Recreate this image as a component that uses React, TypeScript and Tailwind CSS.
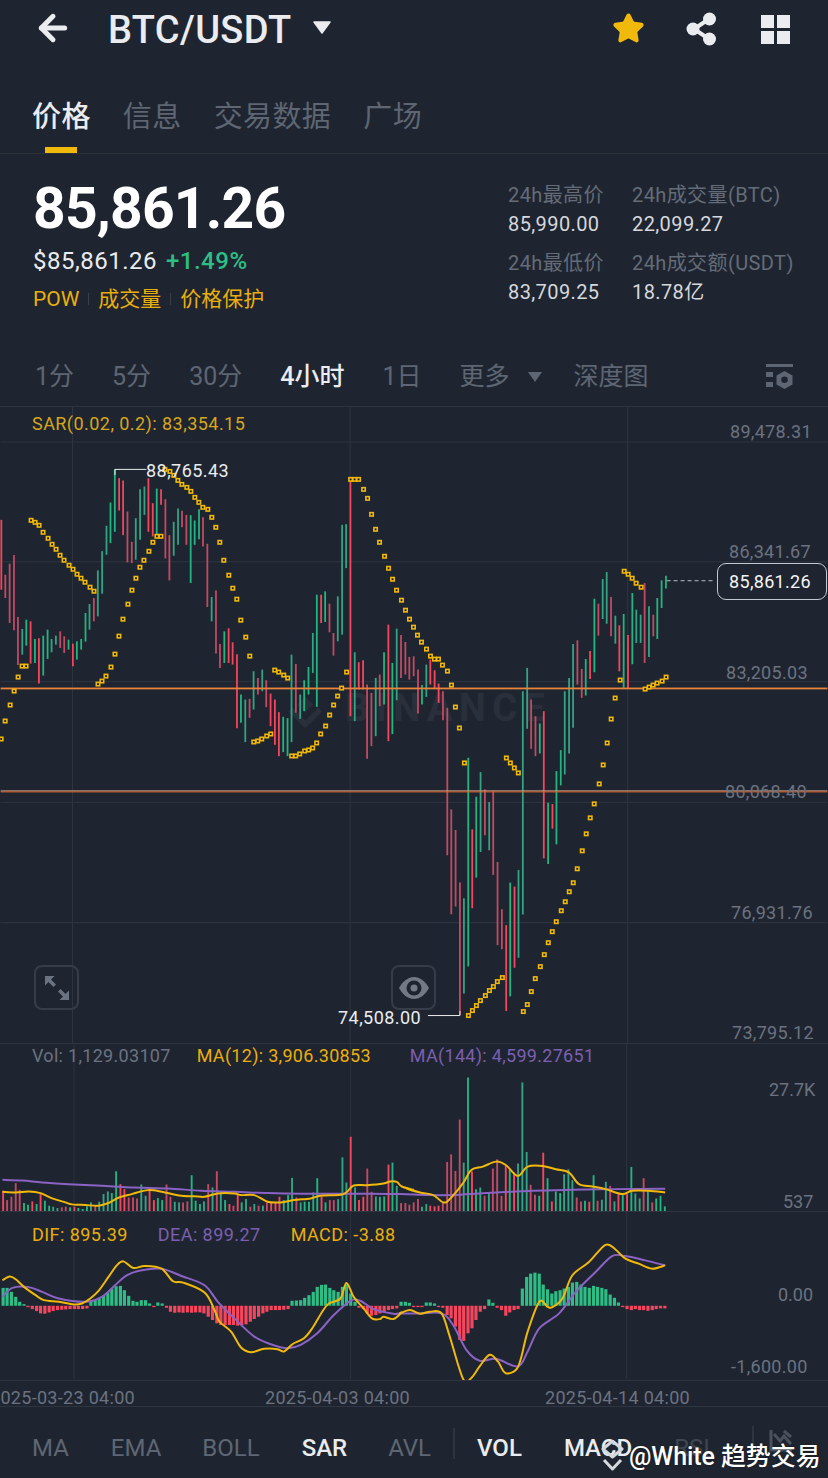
import { ArrowLeft, Star } from "lucide-react"

type Bar = [number, number, number, string]
type Vol = [number, number, string]
type Pt = [number, number]

// values read off the chart at 3x: left half x/3, right half 400 + x/3, y relative to the pane origin
const candlesL: Bar[] = [
  [2, 330, 540, "r"], [14, 495, 565, "d"], [27, 462, 640, "d"], [40, 436, 662, "d"], [52, 622, 766, "d"], [65, 658, 735, "h"],
  [77, 630, 708, "g"], [90, 635, 762, "r"], [103, 688, 760, "g"], [115, 686, 822, "r"], [128, 678, 798, "g"], [141, 660, 748, "g"],
  [153, 688, 728, "h"], [166, 678, 705, "h"], [179, 665, 715, "d"], [191, 680, 730, "d"], [204, 690, 720, "g"], [217, 702, 770, "r"],
  [229, 695, 750, "g"], [242, 688, 720, "g"], [255, 610, 696, "g"], [267, 583, 660, "h"], [280, 565, 635, "d"], [292, 482, 620, "h"],
  [305, 424, 552, "h"], [318, 348, 435, "h"], [330, 278, 400, "g"], [343, 178, 366, "g"], [356, 205, 302, "r"], [368, 212, 376, "r"],
  [381, 305, 458, "d"], [394, 396, 460, "d"], [406, 325, 450, "h"], [419, 238, 390, "h"], [432, 230, 315, "h"], [444, 205, 366, "r"],
  [457, 280, 380, "r"], [469, 236, 378, "g"], [482, 238, 285, "r"], [495, 268, 446, "d"], [507, 376, 512, "d"], [520, 336, 438, "h"],
  [533, 296, 405, "h"], [545, 303, 352, "d"], [558, 315, 405, "d"], [571, 316, 520, "g"], [583, 332, 405, "g"], [596, 298, 388, "g"],
  [608, 322, 410, "d"], [621, 402, 592, "d"], [634, 562, 635, "h"], [647, 542, 732, "d"], [659, 703, 775, "d"], [672, 665, 760, "g"],
  [685, 656, 760, "r"], [697, 698, 765, "r"], [710, 734, 956, "r"], [722, 855, 940, "g"], [735, 870, 998, "h"], [748, 868, 925, "d"],
  [760, 785, 900, "h"], [773, 805, 855, "d"], [786, 780, 845, "h"], [798, 812, 893, "d"], [811, 852, 950, "r"], [824, 870, 1006, "r"],
  [836, 908, 1040, "r"], [849, 922, 1028, "g"], [862, 926, 1040, "g"], [874, 735, 998, "h"], [887, 763, 910, "d"], [900, 855, 928, "h"],
  [912, 812, 905, "g"], [925, 772, 855, "g"], [938, 670, 790, "h"], [950, 555, 892, "g"], [963, 555, 640, "r"], [975, 545, 637, "g"],
  [988, 582, 668, "d"], [1000, 670, 738, "d"], [1013, 560, 695, "h"], [1026, 345, 675, "h"], [1038, 343, 475, "h"], [1051, 215, 920, "r"],
  [1064, 728, 935, "h"], [1076, 758, 840, "r"], [1089, 752, 840, "r"], [1101, 825, 1048, "d"], [1114, 850, 1010, "d"], [1127, 805, 980, "h"],
  [1139, 795, 890, "d"], [1152, 728, 885, "g"], [1165, 645, 995, "r"], [1177, 760, 974, "g"], [1190, 657, 872, "h"], [1203, 676, 805, "d"],
  [1216, 697, 795, "d"], [1228, 742, 810, "d"], [1241, 740, 800, "d"],
]
const candlesR: Bar[] = [
  [54, 780, 912, "d"], [66, 826, 885, "g"], [79, 765, 862, "h"], [91, 750, 825, "r"], [104, 782, 836, "r"], [116, 822, 880, "r"],
  [129, 845, 932, "d"], [142, 895, 1338, "d"], [154, 1200, 1515, "d"], [167, 1262, 1492, "d"], [180, 1420, 1818, "d"], [192, 1467, 1753, "h"],
  [205, 1045, 1672, "g"], [217, 1260, 1497, "r"], [229, 1162, 1405, "g"], [242, 1088, 1328, "h"], [255, 1140, 1278, "d"], [268, 1178, 1323, "h"],
  [280, 1146, 1397, "d"], [293, 1358, 1608, "d"], [306, 1500, 1620, "d"], [319, 1548, 1806, "r"], [331, 1420, 1762, "g"], [344, 1432, 1676, "r"],
  [356, 1382, 1646, "h"], [369, 845, 1516, "h"], [382, 775, 958, "h"], [394, 870, 1018, "d"], [407, 920, 1040, "d"], [420, 942, 1032, "g"],
  [432, 905, 1347, "r"], [445, 1180, 1364, "g"], [458, 1184, 1258, "r"], [470, 1085, 1305, "g"], [483, 1022, 1128, "g"], [495, 845, 1095, "h"],
  [508, 805, 1032, "h"], [520, 703, 955, "h"], [533, 692, 825, "d"], [546, 778, 865, "d"], [558, 748, 858, "g"], [571, 724, 808, "r"],
  [584, 567, 788, "g"], [596, 582, 678, "d"], [609, 508, 628, "h"], [621, 487, 642, "h"], [634, 562, 680, "d"], [647, 618, 702, "h"],
  [659, 647, 785, "r"], [672, 613, 835, "g"], [685, 676, 835, "r"], [698, 550, 764, "g"], [710, 600, 700, "h"], [723, 615, 700, "h"],
  [735, 520, 760, "d"], [748, 590, 742, "h"], [761, 615, 680, "d"], [773, 565, 688, "g"], [786, 512, 595, "g"], [799, 498, 536, "g"],
]

const sarL: Pt[] = [
  [2, 988], [14, 935], [27, 887], [39, 843], [52, 801], [65, 768], [77, 768],
  [90, 330], [102, 338], [115, 347], [128, 366], [141, 384], [153, 402], [166, 418], [178, 435], [191, 450], [204, 465], [216, 479], [229, 492], [242, 506], [254, 518], [267, 531], [279, 543],
  [292, 822], [305, 815], [317, 799], [330, 772], [343, 733], [355, 678], [368, 627], [381, 583], [393, 542], [406, 506], [419, 473], [431, 450], [444, 423], [457, 398], [469, 379], [482, 378],
  [493, 178], [507, 185], [520, 196], [532, 210], [545, 222], [558, 233], [570, 244], [583, 261], [596, 276], [608, 291], [621, 297], [633, 321], [646, 353], [658, 398], [671, 451], [684, 496], [697, 535], [709, 569], [722, 631], [735, 683], [747, 739],
  [760, 997], [773, 994], [785, 989], [798, 980], [811, 973],
  [823, 780], [836, 786], [849, 796], [861, 805],
  [874, 1040], [886, 1038], [899, 1032], [912, 1025], [924, 1021], [937, 1015], [950, 1001], [962, 974], [975, 949], [987, 917], [1000, 887], [1013, 860], [1025, 834], [1038, 786],
  [1051, 209], [1064, 209], [1076, 209], [1089, 238], [1101, 266], [1114, 313], [1127, 357], [1139, 398], [1152, 438], [1164, 474], [1177, 509], [1190, 541], [1203, 571], [1215, 600], [1228, 627], [1240, 652], [1253, 676],
]
const sarR: Pt[] = [
  [65, 698], [78, 719], [91, 740], [103, 748], [116, 748], [128, 766], [141, 783], [154, 827], [166, 893], [179, 956], [192, 1059],
  [205, 1819], [217, 1804], [229, 1789], [242, 1774], [255, 1759], [267, 1745], [280, 1731], [293, 1717], [306, 1704],
  [318, 1044], [331, 1059], [344, 1074], [356, 1089],
  [369, 1807], [381, 1787], [394, 1747], [407, 1708], [420, 1671], [432, 1635], [445, 1600], [458, 1567], [470, 1536], [483, 1505], [495, 1476], [508, 1448], [520, 1421], [533, 1378], [546, 1323], [558, 1272], [571, 1226], [584, 1183], [597, 1122], [609, 1066], [622, 999], [634, 927], [647, 866], [660, 812],
  [672, 485], [685, 492], [698, 506], [710, 520], [723, 533],
  [736, 838], [748, 831], [761, 825], [773, 819], [786, 813], [799, 801],
]

const volL: Vol[] = [
  [2, 455, "r"], [14, 483, "d"], [27, 473, "d"], [40, 432, "d"], [52, 452, "d"], [65, 492, "g"], [77, 497, "g"], [90, 487, "r"], [103, 495, "g"], [115, 465, "r"], [128, 485, "g"], [141, 500, "g"], [153, 503, "h"], [166, 507, "h"], [179, 505, "d"], [191, 503, "d"], [204, 505, "g"], [217, 503, "r"], [229, 507, "g"], [242, 510, "g"], [255, 502, "g"], [267, 490, "h"], [280, 498, "d"], [292, 488, "h"], [305, 465, "h"], [318, 457, "h"], [330, 462, "g"], [343, 396, "g"], [356, 435, "r"], [368, 450, "r"], [381, 475, "d"], [394, 475, "d"], [406, 478, "d"], [419, 436, "h"], [432, 470, "h"], [444, 447, "r"], [457, 483, "r"], [469, 477, "g"], [482, 483, "g"], [495, 436, "d"], [507, 473, "d"], [520, 488, "h"], [533, 490, "h"], [545, 490, "d"], [558, 487, "d"], [571, 408, "g"], [583, 485, "g"], [596, 495, "g"], [608, 487, "h"], [621, 435, "d"], [634, 445, "h"], [647, 396, "d"], [659, 460, "h"], [672, 483, "g"], [685, 495, "r"], [697, 500, "d"], [710, 465, "r"], [722, 490, "g"], [735, 480, "h"], [748, 503, "d"], [760, 495, "h"], [773, 500, "d"], [786, 500, "h"], [798, 490, "d"], [811, 490, "r"], [824, 490, "r"], [836, 473, "r"], [849, 483, "g"], [862, 468, "g"], [874, 416, "h"], [887, 475, "d"], [900, 490, "h"], [912, 488, "g"], [925, 488, "g"], [938, 460, "h"], [950, 417, "g"], [963, 473, "r"], [975, 490, "g"], [988, 483, "d"], [1000, 483, "d"], [1013, 480, "h"], [1026, 354, "h"], [1038, 430, "h"], [1051, 292, "r"], [1064, 445, "h"], [1076, 483, "r"], [1089, 473, "r"], [1101, 388, "d"], [1114, 458, "d"], [1127, 472, "h"], [1139, 473, "g"], [1152, 472, "g"], [1165, 376, "r"], [1177, 370, "g"], [1190, 440, "h"], [1203, 492, "d"], [1216, 492, "d"], [1228, 497, "d"], [1241, 490, "d"],
]
const volR: Vol[] = [
  [54, 480, "d"], [66, 503, "g"], [79, 495, "h"], [91, 500, "r"], [104, 502, "r"], [116, 500, "r"], [129, 490, "d"], [142, 368, "d"], [154, 345, "d"], [167, 395, "d"], [180, 240, "d"], [192, 370, "h"], [205, 113, "g"], [217, 397, "r"], [229, 450, "g"], [242, 445, "h"], [255, 470, "d"], [268, 460, "h"], [280, 388, "d"], [293, 360, "d"], [306, 470, "d"], [319, 380, "r"], [331, 390, "g"], [344, 400, "r"], [356, 373, "h"], [369, 128, "h"], [382, 338, "h"], [394, 437, "d"], [407, 467, "d"], [420, 470, "g"], [432, 340, "r"], [445, 417, "g"], [458, 487, "r"], [470, 457, "g"], [483, 462, "g"], [495, 405, "h"], [508, 390, "h"], [520, 423, "h"], [533, 475, "d"], [546, 487, "d"], [558, 485, "g"], [571, 488, "r"], [584, 408, "g"], [596, 485, "d"], [609, 482, "h"], [621, 428, "h"], [634, 440, "d"], [647, 487, "h"], [659, 465, "r"], [672, 468, "g"], [685, 465, "r"], [698, 383, "g"], [710, 463, "h"], [723, 478, "h"], [735, 417, "d"], [748, 455, "h"], [761, 490, "d"], [773, 478, "g"], [786, 470, "g"], [799, 502, "g"],
]

const volYellowL: Pt[] = [[0, 458], [40, 460], [80, 457], [115, 462], [150, 478], [190, 490], [210, 496], [250, 498], [290, 500], [320, 492], [350, 476], [390, 465], [440, 453], [490, 460], [540, 470], [590, 472], [610, 473], [650, 463], [700, 463], [720, 468], [760, 468], [800, 488], [840, 490], [880, 483], [930, 478], [960, 470], [1020, 467], [1040, 458], [1060, 439], [1100, 438], [1150, 433], [1170, 427], [1190, 428], [1205, 442], [1240, 452]]
const volYellowR: Pt[] = [[20, 448], [60, 460], [100, 468], [130, 490], [150, 480], [190, 432], [215, 392], [250, 382], [290, 367], [320, 378], [355, 410], [385, 382], [430, 380], [470, 390], [510, 400], [540, 435], [580, 442], [620, 450], [670, 465], [700, 455], [750, 455], [800, 460]]
const volPurpleL: Pt[] = [[0, 422], [60, 424], [120, 430], [200, 435], [300, 440], [400, 445], [500, 448], [600, 455], [700, 458], [800, 462], [900, 464], [1020, 464], [1100, 464]]
const volPurpleR: Pt[] = [[0, 465], [80, 468], [160, 468], [260, 462], [400, 455], [520, 452], [640, 450], [800, 449]]

const macdL: Vol[] = [
  [2, 748, "g"], [14, 748, "g"], [27, 760, "g"], [40, 775, "g"], [52, 790, "g"], [65, 797, "g"], [77, 806, "r"], [90, 812, "r"], [103, 818, "r"], [115, 825, "r"], [128, 826, "r"], [141, 822, "r"], [153, 818, "r"], [166, 815, "r"], [179, 814, "r"], [191, 813, "r"], [204, 812, "r"], [217, 812, "r"], [229, 812, "r"], [242, 812, "r"], [255, 810, "r"], [267, 785, "g"], [280, 785, "g"], [292, 778, "g"], [305, 772, "g"], [318, 762, "g"], [330, 750, "g"], [343, 743, "g"], [356, 742, "g"], [368, 755, "g"], [381, 772, "g"], [394, 787, "g"], [406, 790, "g"], [419, 785, "g"], [432, 785, "g"], [444, 795, "g"], [457, 806, "r"], [469, 792, "g"], [482, 795, "g"], [495, 808, "r"], [507, 820, "r"], [520, 823, "r"], [533, 822, "r"], [545, 823, "r"], [558, 822, "r"], [571, 823, "r"], [583, 822, "r"], [596, 822, "r"], [608, 825, "r"], [621, 835, "r"], [634, 845, "r"], [647, 855, "r"], [659, 860, "r"], [672, 860, "r"], [685, 860, "r"], [697, 860, "r"], [710, 862, "r"], [722, 860, "r"], [735, 858, "r"], [748, 850, "r"], [760, 842, "r"], [773, 835, "r"], [786, 825, "r"], [798, 820, "r"], [811, 815, "r"], [824, 815, "r"], [836, 815, "r"], [849, 814, "r"], [862, 812, "r"], [874, 787, "g"], [887, 786, "g"], [900, 785, "g"], [912, 778, "g"], [925, 770, "g"], [938, 760, "g"], [950, 745, "g"], [963, 739, "g"], [975, 738, "g"], [988, 748, "g"], [1000, 755, "g"], [1013, 760, "g"], [1026, 745, "g"], [1038, 738, "g"], [1051, 765, "g"], [1064, 790, "g"], [1076, 808, "r"], [1089, 812, "r"], [1101, 825, "r"], [1114, 832, "r"], [1127, 830, "r"], [1139, 825, "r"], [1152, 820, "r"], [1165, 815, "r"], [1177, 812, "r"], [1190, 810, "r"], [1203, 790, "g"], [1216, 790, "g"], [1228, 793, "g"], [1241, 806, "r"],
]
const macdR: Vol[] = [
  [54, 806, "r"], [66, 806, "r"], [79, 792, "g"], [91, 792, "g"], [104, 795, "g"], [116, 806, "r"], [129, 808, "r"], [142, 830, "r"], [154, 840, "r"], [167, 865, "r"], [180, 905, "r"], [192, 908, "r"], [205, 885, "r"], [217, 870, "r"], [229, 845, "r"], [242, 820, "r"], [255, 812, "r"], [268, 783, "g"], [280, 793, "g"], [293, 808, "r"], [306, 815, "r"], [319, 832, "r"], [331, 822, "r"], [344, 815, "r"], [356, 812, "r"], [369, 750, "g"], [382, 715, "g"], [394, 705, "g"], [407, 702, "g"], [420, 705, "g"], [432, 738, "g"], [445, 752, "g"], [458, 765, "g"], [470, 758, "g"], [483, 755, "g"], [495, 750, "g"], [508, 745, "g"], [520, 732, "g"], [533, 730, "g"], [546, 738, "g"], [558, 745, "g"], [571, 748, "g"], [584, 742, "g"], [596, 745, "g"], [609, 748, "g"], [621, 752, "g"], [634, 768, "g"], [647, 778, "g"], [659, 792, "g"], [672, 806, "r"], [685, 812, "r"], [698, 815, "r"], [710, 812, "r"], [723, 815, "r"], [735, 815, "r"], [748, 817, "r"], [761, 815, "r"], [773, 812, "r"], [786, 810, "r"], [799, 810, "r"],
]

const difL: Pt[] = [[0, 725], [22, 714], [40, 722], [65, 745], [100, 770], [125, 785], [170, 790], [215, 798], [240, 795], [265, 780], [290, 757], [320, 715], [345, 680], [365, 668], [395, 688], [430, 682], [480, 690], [515, 728], [545, 732], [610, 762], [640, 815], [655, 850], [690, 880], [720, 928], [750, 942], [790, 932], [830, 933], [850, 940], [875, 918], [910, 900], [935, 870], [965, 820], [985, 795], [1020, 780], [1038, 733], [1060, 775], [1090, 810], [1115, 840], [1140, 842], [1150, 835], [1180, 842], [1205, 822]]
const difR: Pt[] = [[0, 825], [30, 815], [60, 826], [90, 820], [125, 825], [150, 895], [190, 1022], [215, 1020], [240, 985], [270, 950], [295, 970], [318, 1005], [350, 995], [365, 960], [385, 880], [420, 790], [445, 805], [460, 806], [490, 780], [520, 710], [570, 670], [620, 618], [650, 632], [680, 660], [720, 675], [760, 690], [800, 680]]
const deaL: Pt[] = [[0, 775], [30, 748], [75, 745], [120, 760], [170, 780], [250, 790], [300, 775], [340, 740], [375, 710], [420, 695], [480, 690], [540, 712], [610, 740], [650, 790], [700, 840], [760, 895], [810, 918], [860, 930], [900, 920], [950, 885], [1000, 830], [1050, 787], [1080, 787], [1120, 812], [1180, 826]]
const deaR: Pt[] = [[0, 825], [60, 825], [125, 825], [160, 860], [200, 935], [240, 968], [290, 962], [355, 985], [385, 940], [420, 870], [480, 825], [530, 760], [590, 700], [640, 652], [680, 652], [740, 665], [800, 680]]

const MAIN_Y = 410
const LOW_Y = 1040
const colors: Record<string, string> = { r: "#f6465d", d: "#c34a62", g: "#21b57f", h: "#34a383" }
const gridColor = "#2e3440"

const joinX = <T extends [number, ...unknown[]]>(l: T[], r: T[]) => [
  ...l.map((b) => [b[0] / 3, ...b.slice(1)] as unknown as T),
  ...r.map((b) => [400 + b[0] / 3, ...b.slice(1)] as unknown as T),
]

// catmull-rom through the read points, the lines in the picture are smooth
function smooth(pts: Pt[]) {
  let d = `M${pts[0][0]} ${pts[0][1]}`
  for (let i = 0; i < pts.length - 1; i++) {
    const p0 = pts[i - 1] ?? pts[i]
    const p1 = pts[i]
    const p2 = pts[i + 1]
    const p3 = pts[i + 2] ?? p2
    d += `C${p1[0] + (p2[0] - p0[0]) / 6} ${p1[1] + (p2[1] - p0[1]) / 6} ${p2[0] - (p3[0] - p1[0]) / 6} ${p2[1] - (p3[1] - p1[1]) / 6} ${p2[0]} ${p2[1]}`
  }
  return d
}

const line = (l: Pt[], r: Pt[], y0: number) => smooth(joinX(l, r).map(([x, y]) => [x, y0 + y / 3] as Pt))

function GridV({ y1, y2 }: { y1: number; y2: number }) {
  return (
    <>
      {[72, 350, 628].map((x) => (
        <line key={x} x1={x} x2={x} y1={y1} y2={y2} stroke={gridColor} strokeWidth="1" />
      ))}
    </>
  )
}

function GridH({ ys }: { ys: number[] }) {
  return (
    <>
      {ys.map((y) => (
        <line key={y} x1={0} x2={828} y1={y} y2={y} stroke={gridColor} strokeWidth="1" />
      ))}
    </>
  )
}

function MainChart() {
  const candles = joinX(candlesL, candlesR)
  const sar = joinX<Pt>(sarL, sarR)
  return (
    <div className="relative h-[637px] border-b border-[#2e3440]">
      <svg className="absolute inset-0 h-full w-full" viewBox="0 407 828 637">
        <GridH ys={[442, 562, 682, 803, 923.5]} />
        <GridV y1={407} y2={1044} />
        <text x="345" y="722" className="fill-[#2a303b] text-[38px] font-bold" textLength="200">BINANCE</text>
        <path d="M305 697l8 8-8 8-8-8zM292 708l5 5 8 8 8-8 5-5 4 4-17 17-17-17z" fill="#2a303b" />
        {candles.map(([x, top, bot, c], i) => (
          <line key={i} x1={x} x2={x} y1={MAIN_Y + top / 3} y2={MAIN_Y + bot / 3} stroke={colors[c]} strokeWidth="1.8" />
        ))}
        <rect x="0" y="688" width="828" height="1.8" fill="#e8853d" />
        <rect x="0" y="791" width="828" height="1" fill="#cfa78c" />
        <rect x="0" y="792" width="828" height="1" fill="#d9642c" />
        {sar.map(([x, y], i) => {
          // snapped to the pixel grid so each marker keeps its dark centre
          const px = Math.round(x - 2.5)
          const py = Math.round(MAIN_Y + y / 3 - 2.5)
          return (
            <g key={i}>
              <rect x={px} y={py} width="5" height="5" fill="#f0b90b" />
              <rect x={px + 1.6} y={py + 1.6} width="1.8" height="1.8" fill="#15181f" />
            </g>
          )
        })}
        <path d="M146 469.5H114.5V475" fill="none" stroke="#eaecef" strokeWidth="1" />
        <path d="M428 1016.5H460V1012" fill="none" stroke="#eaecef" strokeWidth="1" />
        <line x1="667" x2="715" y1="581" y2="581" stroke="#b7bdc6" strokeWidth="1" strokeDasharray="4 3" />
      </svg>
      <div className="relative pl-8 pt-[6px] text-[18px] leading-[22px] tracking-[0.45px] text-[#d6a51e]">SAR(0.02, 0.2): 83,354.15</div>
      <span className="absolute left-[146px] top-[53px] text-[18px] leading-[22px] tracking-[0.45px] text-[#eaecef]">88,765.43</span>
      <span className="absolute left-[338px] top-[600px] text-[18px] leading-[22px] tracking-[0.45px] text-[#eaecef]">74,508.00</span>
      {[
        ["89,478.31", "left-[730px] top-[14px]"],
        ["86,341.67", "left-[729px] top-[134px]"],
        ["83,205.03", "left-[726px] top-[255px]"],
        ["80,068.40", "left-[725px] top-[374px]"],
        ["76,931.76", "left-[731px] top-[495px]"],
        ["73,795.12", "left-[732px] top-[615px]"],
      ].map(([t, pos]) => (
        <span key={t} className={`absolute text-[18px] leading-[22px] tracking-[0.3px] text-[#6b7280] ${pos}`}>{t}</span>
      ))}
      <div className="absolute left-[717px] top-[156px] flex h-[37px] w-[110px] items-center justify-center rounded-[9px] border border-[#c4c8d0] bg-[#1f2530] pr-[4px] text-[18px] tracking-[0.3px] text-[#f3f4f6]">85,861.26</div>
      <button className="absolute left-[34px] top-[558px] flex h-[45px] w-[45px] items-center justify-center rounded-lg border-2 border-[#363c48]">
        <svg width="28" height="28" viewBox="0 0 28 28" fill="#6b7280">
          <path d="M2 2h9.5L8 5.5l5 5-2.5 2.5-5-5L2 11.5zM26 26h-9.5l3.5-3.5-5-5 2.5-2.5 5 5 3.5-3.5z" />
        </svg>
      </button>
      <button className="absolute left-[391px] top-[558px] flex h-[45px] w-[45px] items-center justify-center rounded-lg border-2 border-[#363c48]">
        <svg width="30" height="22" viewBox="0 0 30 22">
          <path d="M0 11C4 4 9 0 15 0s11 4 15 11c-4 7-9 11-15 11S4 18 0 11z" fill="#737a86" />
          <circle cx="15" cy="11" r="7.5" fill="#1f2530" />
          <circle cx="15" cy="11" r="3.5" fill="#737a86" />
        </svg>
      </button>
    </div>
  )
}

function VolumeChart() {
  const bars = joinX(volL, volR)
  return (
    <div className="relative h-[168px] border-b border-[#2e3440]">
      <svg className="absolute inset-0 h-full w-full" viewBox="0 1044 828 168">
        <GridV y1={1044} y2={1212} />
        {bars.map(([x, top, c], i) => (
          <line key={i} x1={x} x2={x} y1={LOW_Y + top / 3} y2={1212.5} stroke={colors[c]} strokeWidth="1.9" />
        ))}
        <path d={line(volPurpleL, volPurpleR, LOW_Y)} fill="none" stroke="#8a63c4" strokeWidth="2" />
        <path d={line(volYellowL, volYellowR, LOW_Y)} fill="none" stroke="#f0b90b" strokeWidth="2" />
      </svg>
      <div className="relative flex gap-[26px] pl-8 pt-[1px] text-[18px] leading-[22px] tracking-[0.3px]">
        <span className="text-[#6b7280]">Vol: 1,129.03107</span>
        <span className="text-[#e9ae0e]">MA(12): 3,906.30853</span>
        <span className="ml-[13px] text-[#7b5fb0]">MA(144): 4,599.27651</span>
      </div>
      <span className="absolute left-[769px] top-[35px] text-[18px] leading-[22px] text-[#6b7280]">27.7K</span>
      <span className="absolute left-[783px] top-[147px] text-[18px] leading-[22px] text-[#6b7280]">537</span>
    </div>
  )
}

function MacdChart() {
  const bars = joinX(macdL, macdR)
  return (
    <div className="relative h-[169px] border-b border-[#2e3440]">
      <svg className="absolute inset-0 h-full w-full" viewBox="0 1213 828 169">
        <GridV y1={1213} y2={1381} />
        {bars.map(([x, end, c], i) => (
          <line key={i} x1={x} x2={x} y1={LOW_Y + 802 / 3} y2={LOW_Y + end / 3} stroke={c === "r" ? "#f6465d" : "#2ebd85"} strokeWidth="3.2" />
        ))}
        <path d={line(deaL, deaR, LOW_Y)} fill="none" stroke="#8a63c4" strokeWidth="2" />
        <path d={line(difL, difR, LOW_Y)} fill="none" stroke="#f0b90b" strokeWidth="2" />
      </svg>
      <div className="relative flex pl-8 pt-[12px] text-[18px] leading-[22px] tracking-[0.45px]">
        <span className="text-[#e9ae0e]">DIF: 895.39</span>
        <span className="ml-[30px] text-[#7b5fb0]">DEA: 899.27</span>
        <span className="ml-[30px] text-[#e9ae0e]">MACD: -3.88</span>
      </div>
      <span className="absolute left-[778px] top-[72px] text-[18px] leading-[22px] text-[#6b7280]">0.00</span>
      <span className="absolute left-[731px] top-[144px] text-[18px] leading-[22px] tracking-[0.3px] text-[#6b7280]">-1,600.00</span>
    </div>
  )
}

function Stat({ label, value }: { label: string; value: string }) {
  return (
    <div className="flex flex-col">
      <span className="text-[20px] leading-[28px] tracking-[0.4px] text-[#646c78]">{label}</span>
      <span className="mt-[1px] text-[20px] leading-[28px] tracking-[0.4px] text-[#d5d8dd]">{value}</span>
    </div>
  )
}

export default function App() {
  return (
    <div className="relative h-[1478px] w-[828px] overflow-hidden bg-[#1f2530] font-[Roboto,'Noto_Sans_CJK_SC',sans-serif] text-[#eaecef]">
      <header className="flex h-[60px] items-center pl-[33px] pr-[38px]">
        <ArrowLeft size={40} strokeWidth={3} className="-mt-[4px] text-[#eaecef]" />
        <span className="ml-[35px] text-[38px] font-medium tracking-[0.35px]">BTC/USDT</span>
        <svg width="18" height="13" viewBox="0 0 18 13" className="ml-[21px] -mt-[5px]" fill="#eaecef">
          <path d="M1 1h16L9 12z" stroke="#eaecef" strokeWidth="1.5" strokeLinejoin="round" />
        </svg>
        <Star size={33} fill="#f0b90b" stroke="#f0b90b" strokeWidth={2} className="ml-auto -mt-[4px]" />
        <svg width="31" height="34" viewBox="0 0 31 34" className="ml-[41px] -mt-[2px]" fill="#eaecef" stroke="#eaecef">
          <path d="M23 7L8 17l15 10" fill="none" strokeWidth="4" />
          <circle cx="23.5" cy="7" r="6.5" stroke="none" />
          <circle cx="7" cy="17" r="6.5" stroke="none" />
          <circle cx="23.5" cy="27" r="6.5" stroke="none" />
        </svg>
        <div className="ml-[44px] -mt-[2px] grid h-[29px] w-[29px] grid-cols-2 gap-[3px]">
          <div className="bg-[#eaecef]" />
          <div className="bg-[#eaecef]" />
          <div className="bg-[#eaecef]" />
          <div className="bg-[#eaecef]" />
        </div>
      </header>

      <nav className="relative mt-[15px] flex h-[79px] gap-[32px] border-b border-[#2b3039] pl-[32px] pt-[20px] text-[29px] leading-[44px] tracking-[0.4px] text-[#5e6673]">
        <span className="font-medium text-[#eaecef]">价格</span>
        <span>信息</span>
        <span>交易数据</span>
        <span>广场</span>
        <div className="absolute bottom-0 left-[45px] h-[6px] w-[32px] bg-[#f0b90b]" />
      </nav>

      <section className="flex h-[191px] pl-[33px]">
        <div className="flex w-[475px] flex-col">
          <span className="mt-[20px] text-[57px] font-bold leading-[70px] tracking-[-0.8px] text-white">85,861.26</span>
          <div className="mt-[1px] flex gap-[9px] text-[24px] leading-[32px] tracking-[0.5px]">
            <span className="text-[#eaecef]">$85,861.26</span>
            <span className="font-medium text-[#2ebd85]">+1.49%</span>
          </div>
          <div className="mt-[7px] flex items-center text-[21px] leading-[30px] text-[#e9ae0e]">
            <span>POW</span>
            <span className="mx-[9px] h-[12px] w-px bg-[#3a404a]" />
            <span>成交量</span>
            <span className="mx-[9px] h-[12px] w-px bg-[#3a404a]" />
            <span>价格保护</span>
          </div>
        </div>
        <div className="mt-[27px] grid h-fit grid-cols-[124px_1fr] gap-y-[11px]">
          <Stat label="24h最高价" value="85,990.00" />
          <Stat label="24h成交量(BTC)" value="22,099.27" />
          <Stat label="24h最低价" value="83,709.25" />
          <Stat label="24h成交额(USDT)" value="18.78亿" />
        </div>
      </section>

      <div className="flex h-[62px] items-center border-b border-[#2e3440] pl-[35px] pr-[35px] pt-[3px] text-[25px] text-[#5e6673]">
        <div className="flex items-center gap-[38px]">
          <span>1分</span>
          <span>5分</span>
          <span>30分</span>
          <span className="font-medium text-[#eaecef]">4小时</span>
          <span>1日</span>
          <span className="flex items-center gap-[18px]">
            更多
            <svg width="14" height="10" viewBox="0 0 14 10" fill="#5e6673"><path d="M0 0h14L7 10z" /></svg>
          </span>
          <span className="-ml-[6px]">深度图</span>
        </div>
        <svg width="27" height="27" viewBox="0 0 27 27" className="ml-auto" fill="#5e6673">
          <rect x="0" y="0" width="27" height="3" />
          <rect x="0" y="8" width="7" height="5" />
          <rect x="0" y="18" width="7" height="5" />
          <path d="M18.5 7l8 4.5v9l-8 4.5-8-4.5v-9zM18.5 12.5a3.3 3.3 0 100 6.6 3.3 3.3 0 000-6.6z" fillRule="evenodd" />
        </svg>
      </div>

      <MainChart />
      <VolumeChart />
      <MacdChart />

      <div className="relative h-[26px] border-b border-[#2e3440] text-[18px] leading-[34px] tracking-[0.3px] text-[#6b7280]">
        <span className="absolute -left-[10px] top-0">2025-03-23 04:00</span>
        <span className="absolute left-[265px] top-0">2025-04-03 04:00</span>
        <span className="absolute left-[545px] top-0">2025-04-14 04:00</span>
      </div>

      <div className="flex h-[70px] items-center pl-8 pt-[12px] text-[24px] text-[#5e6673]">
        <span>MA</span>
        <span className="ml-[42px]">EMA</span>
        <span className="ml-[41px]">BOLL</span>
        <span className="ml-[42px] font-medium text-[#eaecef]">SAR</span>
        <span className="ml-[41px]">AVL</span>
        <span className="ml-[22px] -mt-[10px] h-[31px] w-[2px] bg-[#2e3440]" />
        <span className="ml-[22px] font-medium text-[#eaecef]">VOL</span>
        <span className="ml-[42px] font-medium text-[#eaecef]">MACD</span>
        <span className="ml-[42px] text-[#3f4652]">RSI</span>
        <span className="ml-[42px] -mt-[14px] h-[31px] w-[2px] bg-[#2e3440]" />
        <svg width="24" height="24" viewBox="0 0 24 24" className="ml-[15px] -mt-[16px]" fill="none" stroke="#4a515d" strokeWidth="3">
          <path d="M2 2v20h21M5 6l6 7 4-5 7 8M15 3l7 6" />
        </svg>
      </div>

      {/* watermark stamped over the bottom bar */}
      <div className="absolute left-[601px] top-[1439px] flex items-center gap-[5px] text-[25px] font-medium leading-[30px] text-white [text-shadow:0_0_2px_rgba(0,0,0,0.5)]">
        <svg width="23" height="31" viewBox="0 0 23 31" fill="none" stroke="#d5d8dd" strokeWidth="3" strokeLinejoin="round">
          <path d="M11.5 1L21 9l-9.5 8L2 9zM3 20l8.5 9 8.5-9" />
        </svg>
        <span className="mt-[3px] tracking-[-0.1px]">@White 趋势交易</span>
      </div>
    </div>
  )
}
